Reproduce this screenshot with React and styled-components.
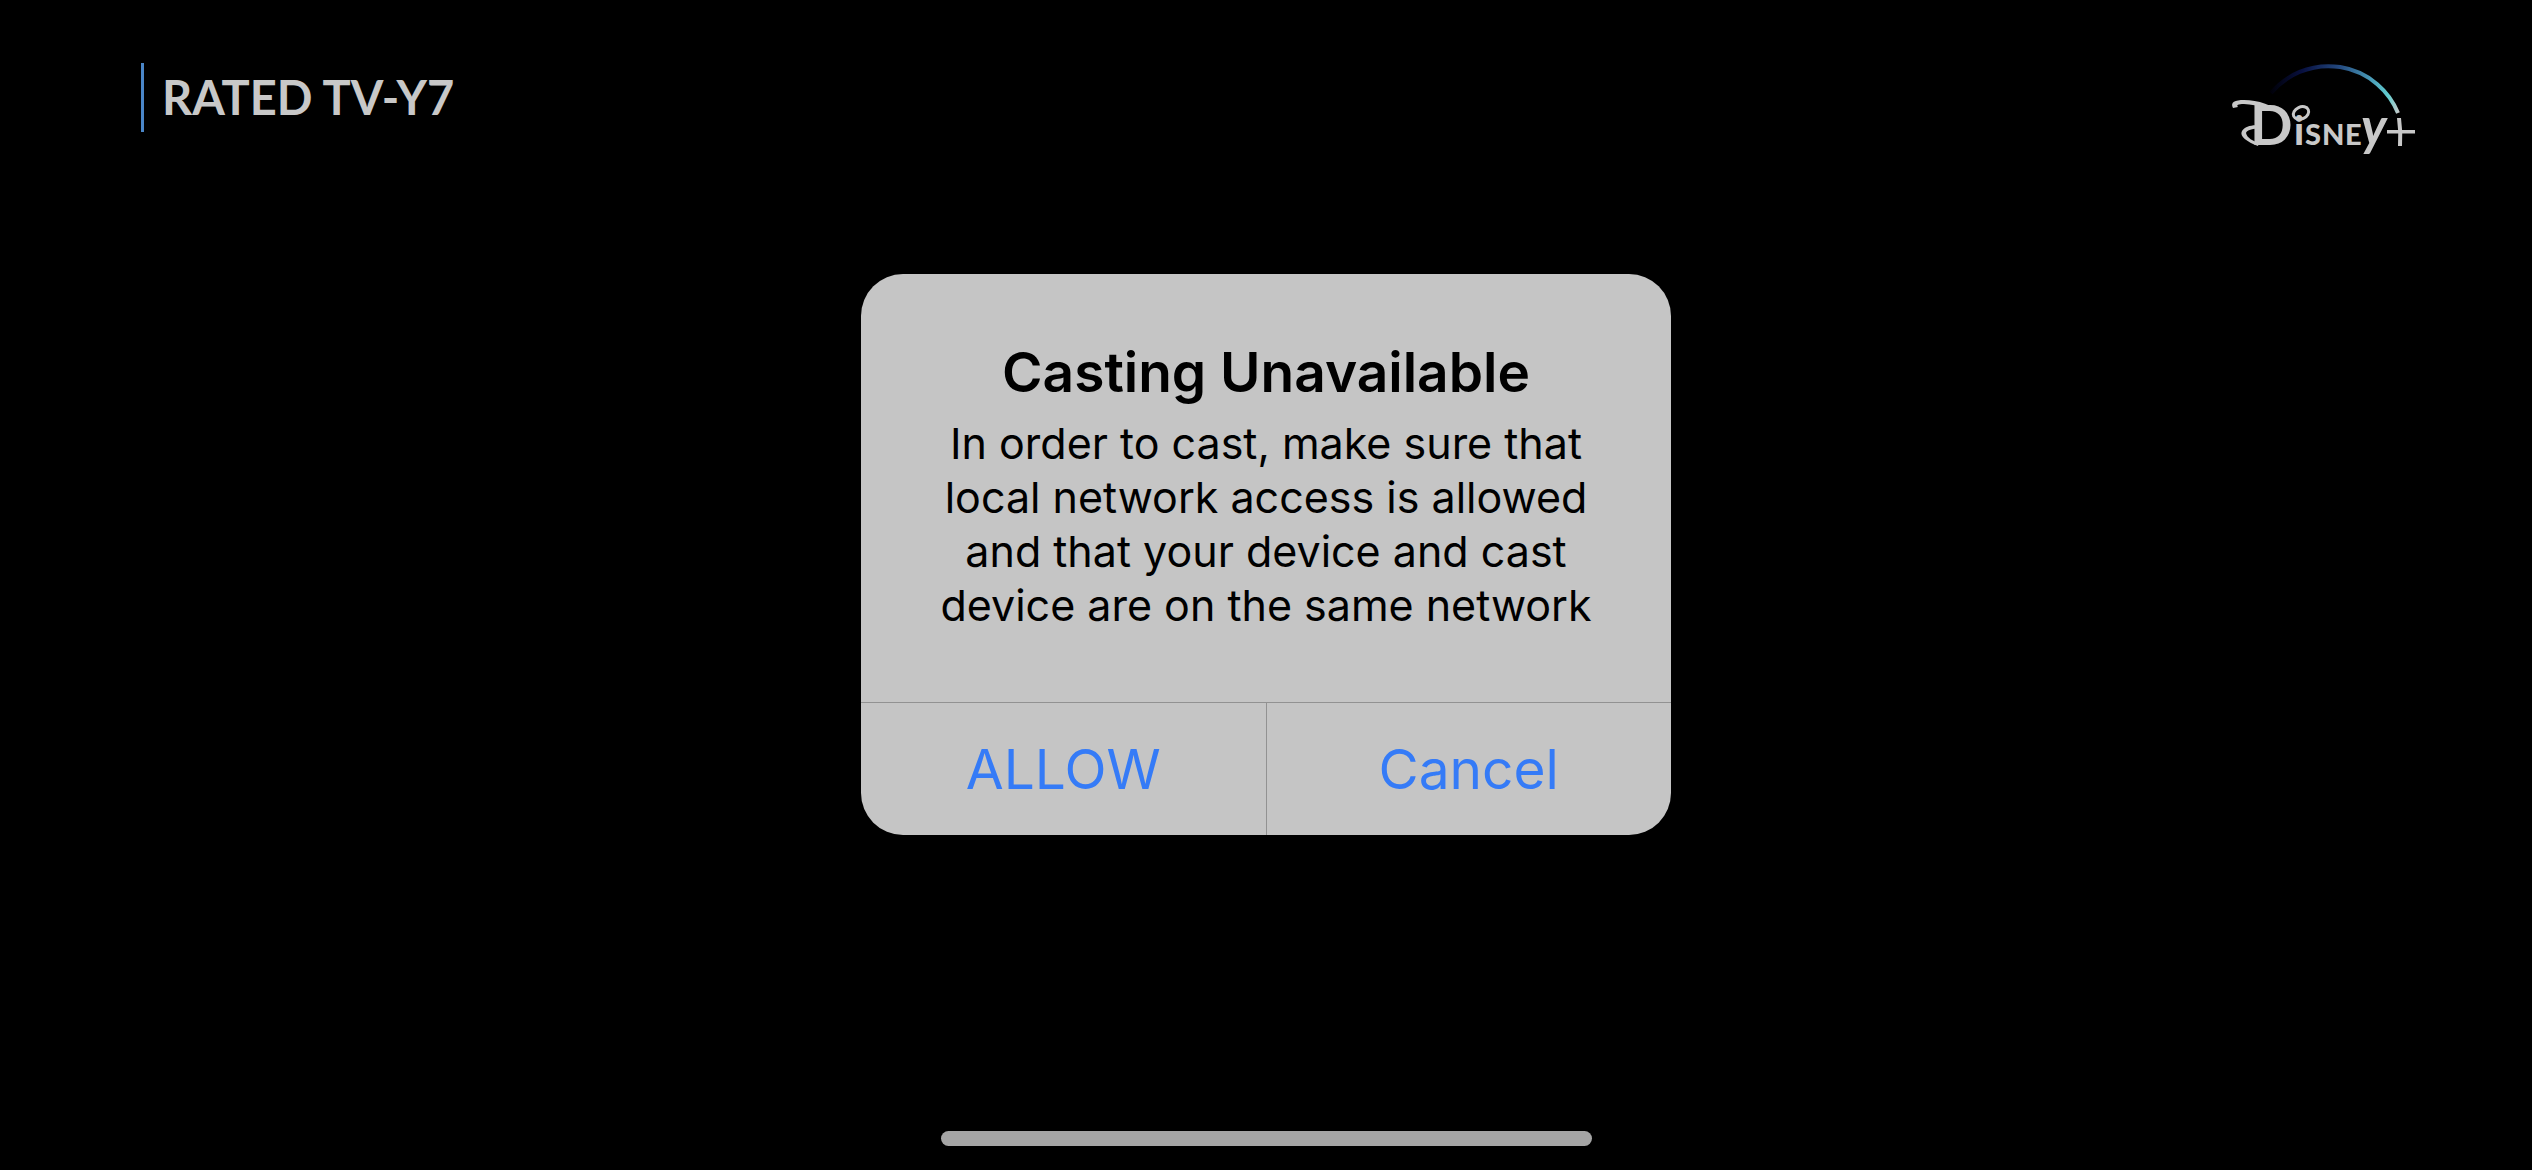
import React from 'react';
import styled, { createGlobalStyle } from 'styled-components';

const GlobalStyle = createGlobalStyle`
  * {
    box-sizing: border-box;
  }
  body {
    margin: 0;
    background-color: #000;
    font-family: Inter, 'Liberation Sans', sans-serif;
  }
`;

const Screen = styled.div`
  display: flex;
  flex-direction: column;
  min-height: 100vh;
  background-color: #000;
`;

const Header = styled.header`
  display: flex;
  justify-content: space-between;
  align-items: flex-start;
  padding: 63px 114px 0 141px;
`;

const Rating = styled.p`
  margin: 0;
  padding-left: 18px;
  border-left: 3px solid #4a86c8;
  color: #c8c8c8;
  font-family: Lato, sans-serif;
  font-size: 47px;
  font-weight: 700;
  line-height: 69px;
`;

const Logo = styled.svg`
  display: block;
  width: 188px;
  height: 104px;
  fill: #c8c8c8;
  font-family: Lato, sans-serif;
  font-weight: 900;
`;

const Initial = styled.tspan`
  font-size: 56px;
  font-weight: 700;
`;

const SmallCaps = styled.tspan`
  font-size: 41px;
  font-variant: small-caps;
`;

const Tail = styled.tspan`
  font-size: 52px;
  font-style: italic;
  font-weight: 700;
`;

const Main = styled.main`
  flex: 1;
  display: flex;
  align-items: center;
  justify-content: center;
`;

const Alert = styled.section`
  width: 810px;
  max-width: 100%;
  overflow: hidden;
  border-radius: 42px;
  background-color: #c5c5c5;
  color: #000;
  text-align: center;
`;

const AlertBody = styled.div`
  padding: 64px 72px 70px;
`;

const Title = styled.h1`
  margin: 0 0 10px;
  font-size: 55px;
  font-weight: 600;
  line-height: 68px;
`;

const Message = styled.p`
  margin: 0;
  font-size: 43px;
  line-height: 54px;
`;

const Actions = styled.div`
  display: flex;
  border-top: 1px solid #929292;
`;

const Action = styled.button`
  flex: 1;
  height: 132px;
  padding: 0;
  border: 0;
  background: none;
  color: #357bf7;
  font-family: inherit;
  font-size: 55px;
  line-height: 68px;
  cursor: pointer;
  & + & {
    border-left: 1px solid #929292;
  }
`;

const Footer = styled.footer`
  display: flex;
  align-items: flex-end;
  justify-content: center;
  height: 229px;
  padding-bottom: 24px;
`;

const HomeIndicator = styled.div`
  width: 651px;
  height: 15px;
  border-radius: 8px;
  background-color: #a5a5a5;
`;

const DisneyLogo = () => (
  <Logo viewBox="0 1 188 104" role="img" aria-label="Disney+">
    <defs>
      <linearGradient id="arc" gradientUnits="userSpaceOnUse" x1="40" y1="32" x2="169" y2="51">
        <stop offset="0" stopColor="#000008" />
        <stop offset="0.22" stopColor="#081040" />
        <stop offset="0.5" stopColor="#244a80" />
        <stop offset="0.75" stopColor="#4a9cb8" />
        <stop offset="0.9" stopColor="#62ced0" />
        <stop offset="1" stopColor="#c8c8c8" />
      </linearGradient>
    </defs>
    <path d="M41 31A75 75 0 0 1 168 51" fill="none" stroke="url(#arc)" strokeWidth="4" />
    {/* flourishes around the initial */}
    <path d="M3 46C0 40 5 38 14 38C28 38 43 43 54 53C42 47 28 43 14 42C8 42 6 43 8 45Z" />
    <path d="M28 84C17 80 9 74 12 69C15 64 24 62 32 64V67C23 66 17 68 16 71C17 76 23 79 29 81Z" />
    {/* loop over the i */}
    <ellipse cx="71" cy="51" rx="8" ry="6" transform="rotate(-24 71 51)" fill="none" stroke="#c8c8c8" strokeWidth="3" />
    <text y="83">
      <Initial x="20">D</Initial>
      <tspan x="64" fontSize="39">i</tspan>
      <SmallCaps x="75 92 115">sne</SmallCaps>
      <Tail x="131">y</Tail>
    </text>
    <path d="M157 68H185V71.500H157ZM167 56H171Q173 70 172 84H168Q169 70 167 56Z" />
  </Logo>
);

const App = () => (
  <>
    <GlobalStyle />
    <Screen>
      <Header>
        <Rating>RATED TV-Y7</Rating>
        <DisneyLogo />
      </Header>
      <Main>
        <Alert role="alertdialog" aria-labelledby="alert-title" aria-describedby="alert-message">
          <AlertBody>
            <Title id="alert-title">Casting Unavailable</Title>
            <Message id="alert-message">
              In order to cast, make sure that local network access is allowed
              and that your device and cast device are on the same network
            </Message>
          </AlertBody>
          <Actions>
            <Action type="button">ALLOW</Action>
            <Action type="button">Cancel</Action>
          </Actions>
        </Alert>
      </Main>
      <Footer>
        <HomeIndicator />
      </Footer>
    </Screen>
  </>
);

export default App;
